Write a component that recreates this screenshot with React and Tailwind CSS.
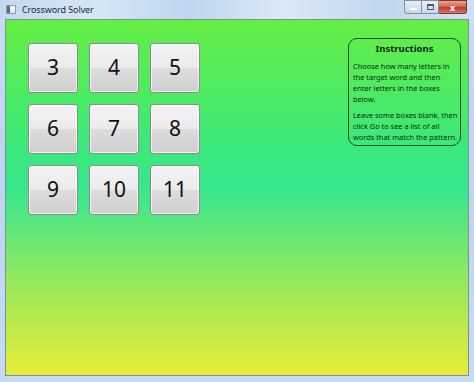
import React from "react";

const nums = [3, 4, 5, 6, 7, 8, 9, 10, 11];

export default function App() {
  return (
    <div
      className="relative w-[474px] h-[382px] overflow-hidden bg-[linear-gradient(180deg,#c9def2_0%,#bcd4ee_40%,#c6dbf1_100%)] flex flex-col"
      style={{ fontFamily: '"Noto Sans", "Open Sans", sans-serif' }}
    >
      {/* title bar */}
      <div className="h-[19px] flex items-center pl-[6px] relative shrink-0 bg-[linear-gradient(90deg,#c3d8ef_0%,#d6e6f6_20%,#c0d6ee_40%,#dbe9f7_60%,#c2d7ef_80%,#cfe1f4_100%)]">
        <div className="w-[10px] h-[9px] border border-[#8e9aa8] bg-[linear-gradient(180deg,#ffffff,#dde3ea)] flex">
          <div className="w-[3px] h-full bg-[#5f6b78]" />
        </div>
        <span className="ml-[6px] text-[9px] text-[#1e2a36] leading-none tracking-[-0.1px]">Crossword Solver</span>
        {/* window controls */}
        <div className="absolute right-[7px] top-0 flex h-[14px]">
          <div className="w-[18px] h-full border border-[#7f8fa3] rounded-bl-[3px] bg-[linear-gradient(180deg,#e7eef7,#c9d7e8)] flex items-end justify-center pb-[3px]">
            <div className="w-[7px] h-[2px] bg-[#4b5563] border-[0.5px] border-white" />
          </div>
          <div className="w-[17px] h-full border-y border-r border-[#7f8fa3] bg-[linear-gradient(180deg,#e7eef7,#c9d7e8)] flex items-center justify-center">
            <div className="w-[7px] h-[6px] border border-[#4b5563] border-t-2" />
          </div>
          <div className="w-[28px] h-full border-y border-r border-[#7a3a30] rounded-br-[3px] bg-[linear-gradient(180deg,#e8a596_0%,#d66450_45%,#c0392b_55%,#d8786a_100%)] flex items-center justify-center">
            <span className="text-white text-[9px] font-bold leading-none">x</span>
          </div>
        </div>
      </div>

      {/* client area */}
      <div className="mx-[5px] mb-[6px] flex-1 border border-[#7d8f9e] relative bg-[linear-gradient(180deg,#66ee44_0%,#3be87a_35%,#38e68e_48%,#9ae85a_75%,#e6ec38_100%)] flex justify-between">
        <div className="pl-[22px] pt-[23px]">
          <div className="grid grid-cols-[50px_50px_50px] gap-x-[11px] gap-y-[11px]">
            {nums.map((n) => (
              <div
                key={n}
                className="w-[50px] h-[50px] rounded-[3px] border border-[#8c8c8c] bg-[linear-gradient(180deg,#f3f3f3_0%,#ebebeb_50%,#dddddd_50%,#cfcfcf_100%)] flex items-center justify-center shadow-[inset_0_0_0_1px_rgba(255,255,255,0.7)]"
              >
                <span className="text-[21px] leading-none text-[#111] pb-[1px]">{n}</span>
              </div>
            ))}
          </div>
        </div>

        <div className="mr-[7px] mt-[18px] w-[113px] h-[108px] border-[1.5px] border-[#1d4d1d] rounded-[9px] px-[4px] pt-[4px] text-[#0d2a0d]">
          <div className="text-center font-bold text-[9.5px] leading-[12px]">Instructions</div>
          <p className="mt-[6px] text-[7.4px] leading-[11px] whitespace-nowrap">
            Choose how many letters in
            <br />
            the target word and then
            <br />
            enter letters in the boxes
            <br />
            below.
          </p>
          <p className="mt-[5px] text-[7.4px] leading-[11px] whitespace-nowrap">
            Leave some boxes blank, then
            <br />
            click Go to see a list of all
            <br />
            words that match the pattern.
          </p>
        </div>
      </div>
    </div>
  );
}
